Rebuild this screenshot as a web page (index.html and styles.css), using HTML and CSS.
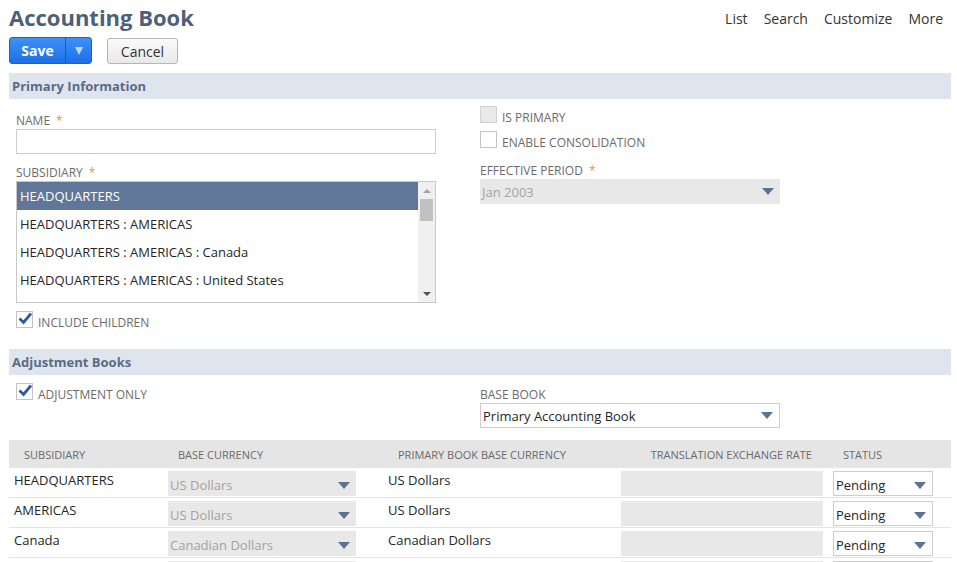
FILE: index.html
```html
<!DOCTYPE html>
<html>
<head>
<meta charset="utf-8">
<title>Accounting Book</title>
<link rel="stylesheet" href="styles.css">
</head>
<body>
<div class="page">
  <header class="topbar">
    <h1 class="title">Accounting Book</h1>
    <nav class="nav"><a>List</a><a>Search</a><a>Customize</a><a>More</a></nav>
  </header>
  <div class="actions">
    <div class="btn-save"><span class="save-label">Save</span><span class="save-arrow"></span></div>
    <button class="btn-cancel">Cancel</button>
  </div>

  <section class="section">
    <div class="section-head">Primary Information</div>
    <div class="fields fields-primary">
      <div class="col-left">
        <div class="label">Name<span class="req">*</span></div>
        <div class="input"></div>
        <div class="label label-gap">Subsidiary<span class="req">*</span></div>
        <div class="listbox">
          <div class="options">
            <div class="opt sel">HEADQUARTERS</div>
            <div class="opt">HEADQUARTERS : AMERICAS</div>
            <div class="opt">HEADQUARTERS : AMERICAS : Canada</div>
            <div class="opt">HEADQUARTERS : AMERICAS : United States</div>
          </div>
          <div class="scroll">
            <div class="sc-btn"><span class="sc-up"></span></div>
            <div class="sc-thumb"></div>
            <div class="sc-fill"></div>
            <div class="sc-btn"><span class="sc-down"></span></div>
          </div>
        </div>
        <div class="check-row check-gap">
          <span class="cb"><svg viewBox="0 0 17 17" width="17" height="17"><path d="M3.5 7.5 L7.5 11.5 L15 2.5" fill="none" stroke="#2c5aa0" stroke-width="2.8"/></svg></span>
          <span class="cb-label">Include Children</span>
        </div>
      </div>
      <div class="col-right col-right-primary">
        <div class="check-row">
          <span class="cb cb-disabled"></span>
          <span class="cb-label">Is Primary</span>
        </div>
        <div class="check-row row-gap">
          <span class="cb"></span>
          <span class="cb-label">Enable Consolidation</span>
        </div>
        <div class="label label-gap2">Effective Period<span class="req">*</span></div>
        <div class="select disabled"><span>Jan 2003</span><span class="arrow"></span></div>
      </div>
    </div>
  </section>

  <section class="section">
    <div class="section-head">Adjustment Books</div>
    <div class="fields fields-adjust">
      <div class="col-left">
        <div class="check-row">
          <span class="cb"><svg viewBox="0 0 17 17" width="17" height="17"><path d="M3.5 7.5 L7.5 11.5 L15 2.5" fill="none" stroke="#2c5aa0" stroke-width="2.8"/></svg></span>
          <span class="cb-label">Adjustment Only</span>
        </div>
      </div>
      <div class="col-right col-right-adjust">
        <div class="label">Base Book</div>
        <div class="select normal"><span>Primary Accounting Book</span><span class="arrow"></span></div>
      </div>
    </div>

    <div class="table">
      <div class="trow thead">
        <div>Subsidiary</div>
        <div>Base Currency</div>
        <div>Primary Book Base Currency</div>
        <div class="th-right">Translation Exchange Rate</div>
        <div>Status</div>
      </div>
      <div class="trow">
        <div class="cell-text">HEADQUARTERS</div>
        <div><div class="select disabled tsel"><span>US Dollars</span><span class="arrow"></span></div></div>
        <div class="cell-text">US Dollars</div>
        <div><div class="rate"></div></div>
        <div><div class="select normal ssel"><span>Pending</span><span class="arrow"></span></div></div>
      </div>
      <div class="trow">
        <div class="cell-text">AMERICAS</div>
        <div><div class="select disabled tsel"><span>US Dollars</span><span class="arrow"></span></div></div>
        <div class="cell-text">US Dollars</div>
        <div><div class="rate"></div></div>
        <div><div class="select normal ssel"><span>Pending</span><span class="arrow"></span></div></div>
      </div>
      <div class="trow">
        <div class="cell-text">Canada</div>
        <div><div class="select disabled tsel"><span>Canadian Dollars</span><span class="arrow"></span></div></div>
        <div class="cell-text">Canadian Dollars</div>
        <div><div class="rate"></div></div>
        <div><div class="select normal ssel"><span>Pending</span><span class="arrow"></span></div></div>
      </div>
      <div class="trow">
        <div class="cell-text"></div>
        <div><div class="select disabled tsel"></div></div>
        <div class="cell-text"></div>
        <div><div class="rate"></div></div>
        <div><div class="select normal ssel"></div></div>
      </div>
    </div>
  </section>
</div>
</body>
</html>
```

FILE: styles.css
```css
* { box-sizing: border-box; margin: 0; padding: 0; }

body {
  font-family: "Open Sans", "Liberation Sans", sans-serif;
  color: #262626;
  background: #fff;
  width: 957px;
  height: 562px;
  overflow: hidden;
}

.page { padding: 0 6px 0 9px; }

/* Top bar */
.topbar {
  display: flex;
  justify-content: space-between;
  align-items: flex-start;
  height: 37px;
}
.title {
  font-size: 22px;
  font-weight: 700;
  color: #4d5f7a;
  line-height: 30px;
  padding-top: 2px;
}
.nav {
  display: flex;
  gap: 16px;
  margin-right: 8px;
  padding-top: 9px;
  font-size: 14px;
  line-height: 20px;
  color: #333;
}

/* Buttons */
.actions {
  display: flex;
  gap: 15px;
  height: 27px;
  margin-bottom: 9px;
}
.btn-save {
  display: flex;
  width: 83px;
  height: 27px;
  border: 1px solid #1d62cb;
  border-radius: 3px;
  background: linear-gradient(#3e91f7, #1c6fe6);
  color: #fff;
}
.save-label {
  width: 56px;
  font-size: 14px;
  font-weight: 700;
  line-height: 25px;
  text-align: center;
  border-right: 1px solid #1a5bc0;
}
.save-arrow {
  flex: 1;
  display: flex;
  align-items: center;
  justify-content: center;
}
.save-arrow::before {
  content: "";
  border-left: 4.5px solid transparent;
  border-right: 4.5px solid transparent;
  border-top: 8px solid #c3d7f6;
}
.btn-cancel {
  width: 71px;
  height: 26px;
  margin-top: 1px;
  border: 1px solid #b5b5b5;
  border-radius: 3px;
  background: linear-gradient(#fafafa, #e9e9e9);
  font: 14px "Open Sans", sans-serif;
  color: #333;
}

/* Sections */
.section-head {
  height: 26px;
  background: #dfe5ee;
  color: #5b6b86;
  font-size: 13px;
  font-weight: 700;
  line-height: 26px;
  padding-left: 3px;
}
.fields {
  display: flex;
  padding-left: 7px;
}
.fields-primary { padding-bottom: 18px; }
.fields-adjust { padding-bottom: 12px; }
.col-left { width: 420px; }
.fields-primary .col-left { padding-top: 13px; }
.fields-adjust .col-left { padding-top: 8px; }
.col-right { margin-left: 44px; width: 300px; }
.col-right-primary { padding-top: 7px; }
.col-right-adjust { padding-top: 11px; }

.label {
  font-size: 12px;
  line-height: 17px;
  color: #6b6b6b;
  text-transform: uppercase;
}
.label-gap { margin-top: 10px; }
.label-gap2 { margin-top: 11px; }
.req { color: #e39a2a; margin-left: 6px; }

.input {
  height: 25px;
  border: 1px solid #cdcdcd;
  background: #fff;
}

/* Listbox */
.listbox {
  display: flex;
  height: 122px;
  border: 1px solid #c8c8c8;
}
.options { flex: 1; }
.opt {
  height: 28px;
  line-height: 28px;
  padding-left: 3px;
  font-size: 13px;
  color: #262626;
}
.opt.sel { background: #607799; color: #fff; }
.scroll {
  width: 17px;
  background: #f0f0f0;
  display: flex;
  flex-direction: column;
  align-items: center;
}
.sc-btn {
  height: 17px;
  width: 100%;
  display: flex;
  align-items: center;
  justify-content: center;
}
.sc-up {
  border-left: 4px solid transparent;
  border-right: 4px solid transparent;
  border-bottom: 4px solid #a3a3a3;
}
.sc-down {
  border-left: 4px solid transparent;
  border-right: 4px solid transparent;
  border-top: 4px solid #505050;
}
.sc-thumb {
  width: 13px;
  height: 22px;
  background: #c1c1c1;
}
.sc-fill { flex: 1; }

/* Checkboxes */
.check-row {
  display: flex;
  align-items: flex-start;
  gap: 5px;
}
.check-gap { margin-top: 8px; }
.row-gap { margin-top: 5px; }
.cb {
  width: 17px;
  height: 17px;
  border: 1px solid #c4c4c4;
  background: #fff;
  flex: none;
  position: relative;
}
.cb svg { position: absolute; left: -1px; top: -1px; }
.cb-disabled { background: #e9e9e9; border-color: #d2d2d2; }
.cb-label {
  margin-top: 3px;
  font-size: 12px;
  line-height: 17px;
  color: #6b6b6b;
  text-transform: uppercase;
}

/* Selects */
.select {
  height: 25px;
  width: 300px;
  display: flex;
  align-items: center;
  justify-content: space-between;
  padding: 0 6px 0 2px;
  font-size: 13px;
}
.select.disabled { background: #e8e8e8; color: #a3a3a3; }
.select.normal { border: 1px solid #cdcdcd; background: #fff; color: #262626; }
.arrow {
  width: 0;
  height: 0;
  border-left: 6px solid transparent;
  border-right: 6px solid transparent;
  border-top: 7px solid #5b7295;
}

/* Table */
.table { width: 942px; }
.trow {
  display: grid;
  grid-template-columns: 154px 220px 233px 212px 123px;
  height: 30px;
  border-bottom: 1px solid #e4e4e4;
}
.trow > div { padding: 3px 5px 0; }
.thead {
  height: 28px;
  background: #e5e5e5;
  border-bottom: none;
  align-items: center;
}
.thead > div {
  padding: 0 0 0 15px;
  font-size: 11px;
  color: #6a6a6a;
  text-transform: uppercase;
}
.thead > .th-right { text-align: right; padding: 0 16px 0 0; }
.cell-text { font-size: 13px; line-height: 18px; color: #262626; }
.tsel { width: 188px; padding-top: 3px; }
.rate { height: 25px; width: 202px; background: #e8e8e8; }
.ssel { width: 100px; padding-top: 3px; }
```
